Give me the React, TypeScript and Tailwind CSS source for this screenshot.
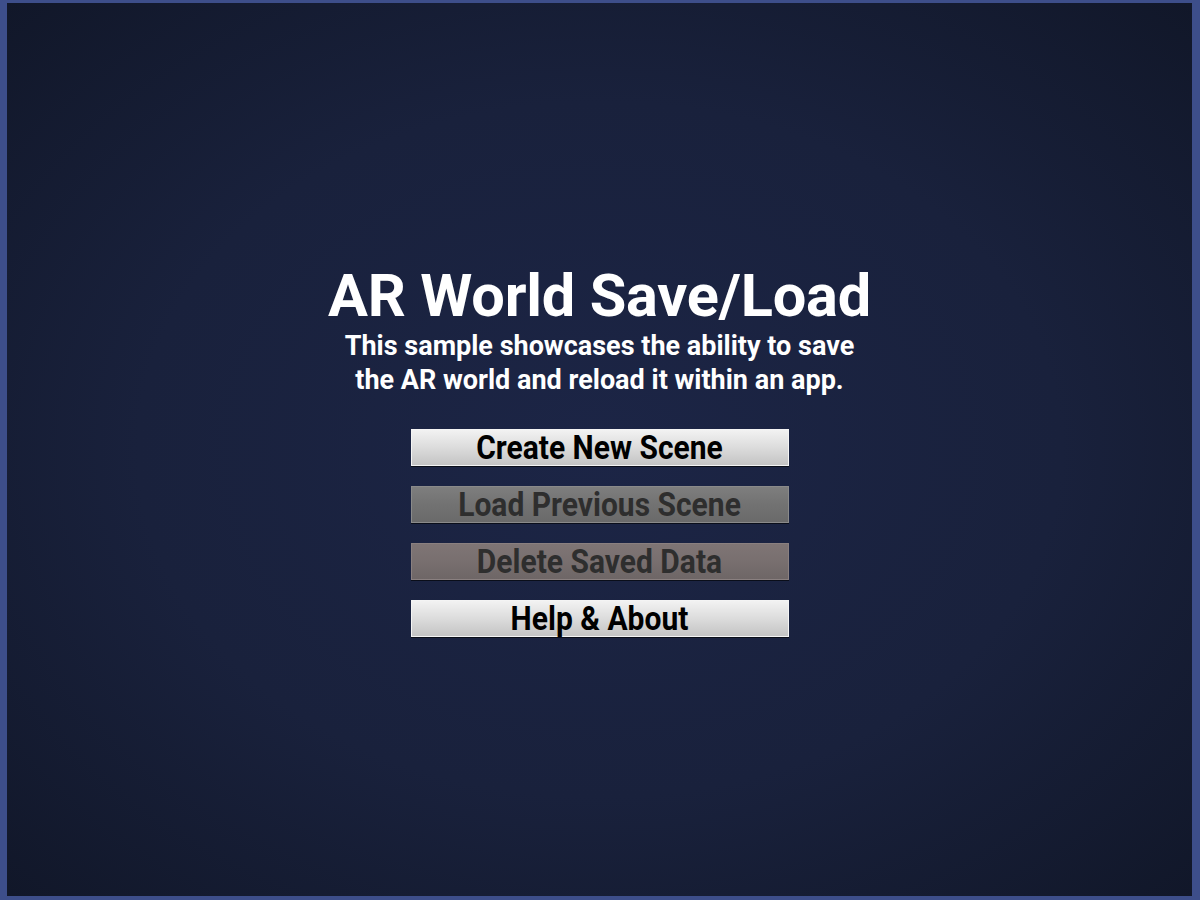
import React from "react";

type MenuButtonProps = {
  label: string;
  variant?: "active" | "disabled" | "danger";
};

const MenuButton: React.FC<MenuButtonProps> = ({ label, variant = "active" }) => {
  const styles = {
    active:
      "bg-gradient-to-b from-[#f2f2f2] via-[#dcdcdc] to-[#c4c4c4] border-[#f4f4f4] text-black",
    disabled:
      "bg-gradient-to-b from-[#7e7e7e] via-[#727272] to-[#6a6a6a] border-[#8a8a8a] text-[#2e2e2e]",
    danger:
      "bg-gradient-to-b from-[#7f7575] via-[#786f6f] to-[#6e6666] border-[#8a8080] text-[#2e2e2e]",
  }[variant];

  return (
    <button
      className={`w-[378px] h-[37px] border flex items-center justify-center text-[30px] font-bold leading-none shadow-[0_1px_0_rgba(0,0,0,0.6)] ${styles}`}
    >
      <span className="inline-block scale-y-[1.08]">{label}</span>
    </button>
  );
};

export default function App() {
  return (
    <div
      className="w-[1200px] h-[900px] bg-[#3d4e8a] pl-[7px] pr-[8px] pt-[3px] pb-[4px]"
      style={{ fontFamily: "Roboto, 'Liberation Sans', sans-serif" }}
    >
      <div className="w-full h-full bg-[radial-gradient(ellipse_at_center,#1c2546_0%,#19213c_55%,#111729_100%)] flex flex-col items-center pt-[259px]">
        <h1 className="text-white font-bold text-[59.5px] leading-[68px] tracking-[-0.2px]">
          AR World Save/Load
        </h1>
        <p className="text-white font-bold text-[27px] leading-[34px] text-center mt-[-1px]">
          This sample showcases the ability to save
          <br />
          the AR world and reload it within an app.
        </p>
        <div className="flex flex-col gap-[20px] mt-[32px]">
          <MenuButton label="Create New Scene" />
          <MenuButton label="Load Previous Scene" variant="disabled" />
          <MenuButton label="Delete Saved Data" variant="danger" />
          <MenuButton label="Help & About" />
        </div>
      </div>
    </div>
  );
}
